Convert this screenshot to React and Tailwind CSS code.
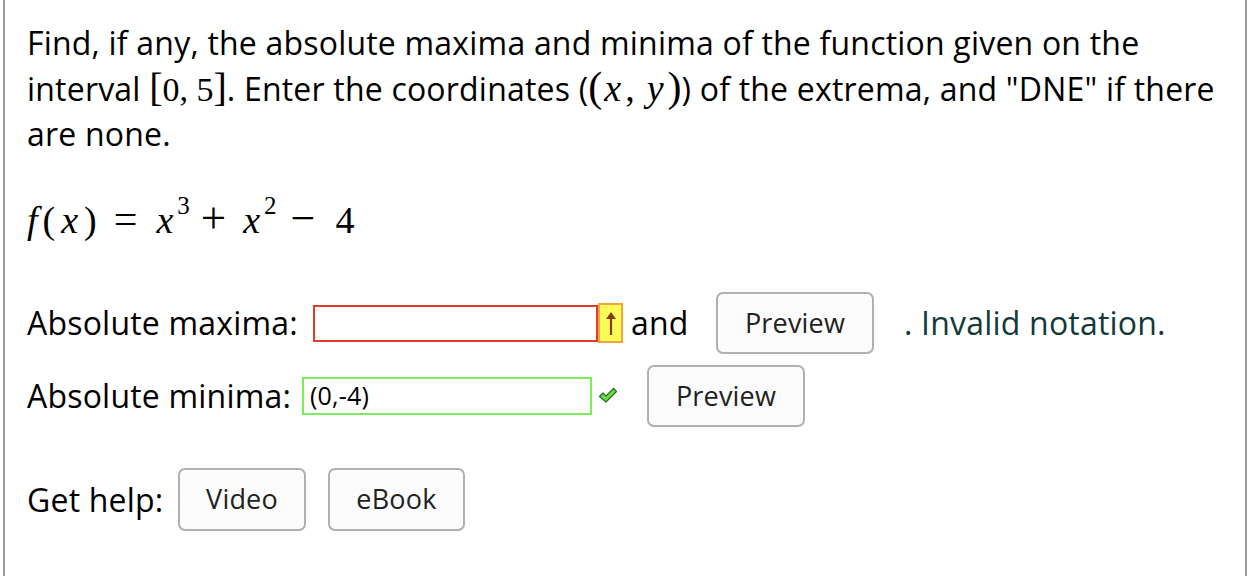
export default function App() {
    const M = "font-['Liberation_Serif',serif]";

    return (
        <div className="min-h-[576px] bg-white">
            <div className="ml-[3px] w-[1244px] min-h-[576px] border-l-2 border-r-2 border-[#9b9b9b] pl-[22px] pt-[21px] font-['Open_Sans',sans-serif] text-[32px] tracking-[0.2px] text-black">
                {/* question text */}
                <p className="leading-[44px] whitespace-nowrap">
                    Find, if any, the absolute maxima and minima of the function given on the
                    <br />
                    interval{' '}
                    <span className={`${M} text-[34px] tracking-normal`}><span className="text-[40px]">[</span>0, 5<span className="text-[40px]">]</span></span>. Enter the coordinates (
                    <span className={`${M} text-[38px] tracking-normal`}><span className="text-[42px]">(</span><i className="ml-[2px] mr-[4px]">x</i>,<span className="ml-[12px]" /><i>y</i><span className="text-[42px] ml-[4px]">)</span></span>) of the extrema, and "DNE" if there
                    <br />
                    are none.
                </p>

                {/* formula */}
                <div className={`${M} text-[38px] tracking-normal mt-[42px] leading-[40px] whitespace-nowrap`}>
                    <i className="mr-[5px]">f</i>(<i className="mx-[6px]">x</i>)<span className="ml-[17px] mr-[19px] text-[42px]">=</span><i>x</i><sup className="text-[25px] ml-[4px] -top-[0.75em]">3</sup><span className="ml-[11px] mr-[17px] text-[45px]">+</span><i>x</i><sup className="text-[25px] ml-[4px] -top-[0.75em]">2</sup><span className="ml-[14px] mr-[20px] text-[44px]">−</span>4
                </div>

                {/* maxima row */}
                <div className="flex items-center mt-[52px] h-[62px]">
                    <span className="w-[286px] shrink-0">Absolute maxima:</span>
                    <div className="w-[285px] h-[37px] border-2 border-[#e03a2c] bg-white"></div>
                    <div className="w-[25px] h-[40px] bg-[#fdfd5a] border-2 border-[#f0a43a] flex items-center justify-center">
                        <svg width="12" height="26" viewBox="0 0 12 26">
                            <path d="M6 25 V4" stroke="#8a3b12" strokeWidth="2.2" fill="none" />
                            <path d="M1 9 L6 2 L11 9 Z" fill="#8a3b12" />
                        </svg>
                    </div>
                    <span className="ml-[8px] w-[55px]">and</span>
                    <button className="ml-[30px] w-[158px] h-[62px] rounded-[7px] border-2 border-[#b0b0b0] bg-[#fcfcfc] text-[27px] text-[#222]">Preview</button>
                    <span className="ml-[30px] text-[#123a3a]">. Invalid notation.</span>
                </div>

                {/* minima row */}
                <div className="flex items-center mt-[11px] h-[62px]">
                    <span className="w-[275px] shrink-0">Absolute minima:</span>
                    <div className="w-[290px] h-[38px] border-2 border-[#7ded58] bg-white flex items-center pl-[6px] text-[25px]">(0,-4)</div>
                    <svg className="ml-[6px]" width="20" height="18" viewBox="0 0 20 18">
                        <path d="M1.5 9.5 L5 6 L8 9 L15.5 1.5 L18.5 4.5 L8 15 Z" fill="#6bdc48" stroke="#2f6a1e" strokeWidth="1.2" strokeLinejoin="round" />
                    </svg>
                    <button className="ml-[29px] w-[158px] h-[62px] rounded-[7px] border-2 border-[#b0b0b0] bg-[#fcfcfc] text-[27px] text-[#222]">Preview</button>
                </div>

                {/* help row */}
                <div className="flex items-center mt-[41px] h-[63px]">
                    <span className="w-[151px] shrink-0">Get help:</span>
                    <button className="w-[128px] h-[63px] rounded-[7px] border-2 border-[#b0b0b0] bg-[#fcfcfc] text-[27px] text-[#222]">Video</button>
                    <button className="ml-[22px] w-[137px] h-[63px] rounded-[7px] border-2 border-[#b0b0b0] bg-[#fcfcfc] text-[27px] text-[#222]">eBook</button>
                </div>
            </div>
        </div>
    );
}
